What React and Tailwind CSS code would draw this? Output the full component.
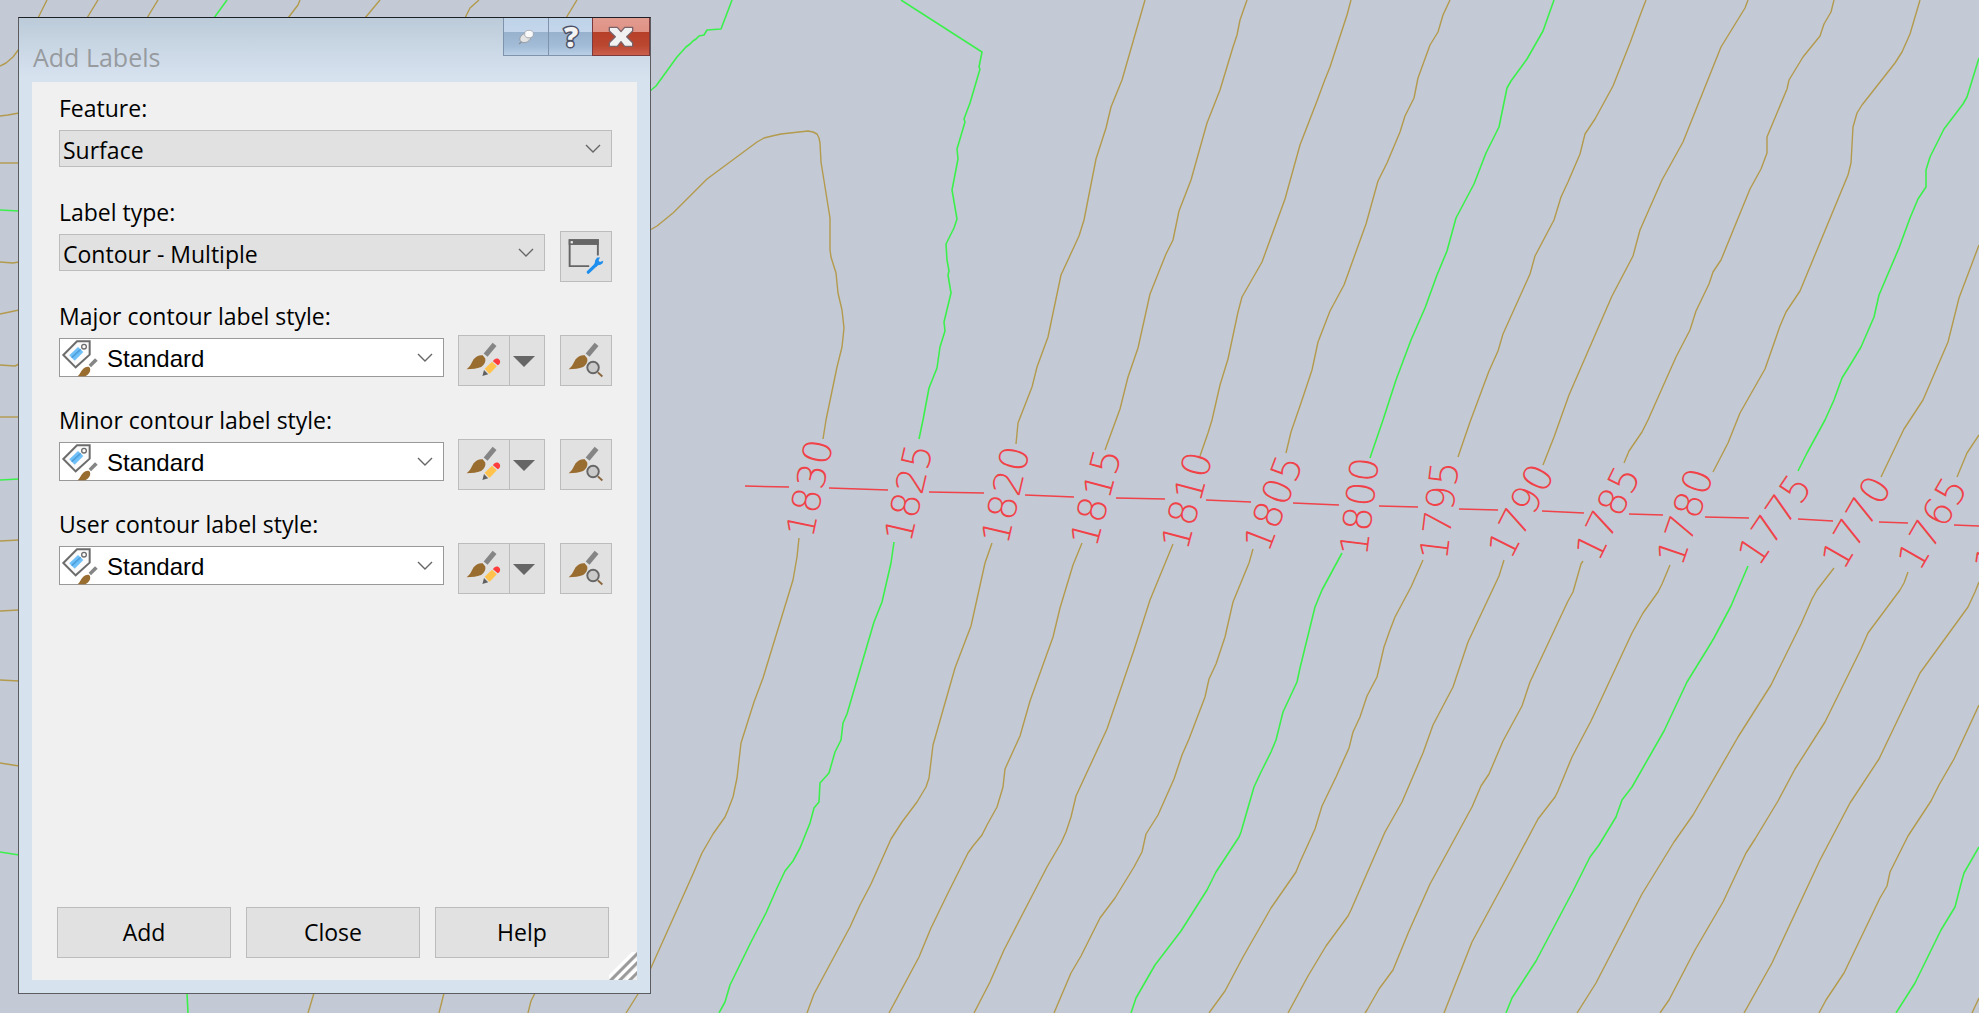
import React, { useState } from "react";

const minorContours = [
  "0,66 6,63 13,57 19,49",
  "0,116 8,115 19,113",
  "0,163 19,163",
  "0,262 13,263 19,262",
  "0,314 19,310",
  "0,365 15,366 19,364",
  "0,417 19,417",
  "0,541 19,540",
  "0,611 19,610",
  "0,680 19,681",
  "0,763 19,766",
  "47,0 38,18",
  "98,0 87,18",
  "158,0 147,18",
  "300,0 298,5 288,18",
  "380,0 365,18",
  "479,0 470,8 465,18",
  "577,0 566,18",
  "314,993 308,1013",
  "444,993 439,1013",
  "535,993 531,1001 528,1013",
  "650,230 657,226 673,213 707,179 757,142 764,138 772,136 781,134 808,131 813,132 817,134 819,138 820,143 821,162 830,218 830,250 831,257 836,273 838,293 842,310 844,328 842,347 837,367 826,420 823,439",
  "1145,0 1122,80 1111,107 1106,128 1096,159 1084,220 1079,236 1061,275 1048,337 1037,367 1032,387 1018,423 1016,444",
  "1247,0 1240,20 1237,35 1233,47 1220,90 1207,123 1191,180 1179,211 1173,240 1166,254 1158,274 1150,294 1138,348 1128,377 1120,409 1105,450",
  "1351,0 1347,15 1330,67 1324,82 1317,101 1300,145 1285,199 1262,262 1242,297 1238,312 1228,359 1220,385 1212,420 1208,433 1200,456",
  "1450,0 1443,15 1438,32 1430,45 1418,78 1414,98 1405,116 1400,132 1387,163 1378,181 1366,224 1344,285 1330,311 1318,342 1312,370 1301,403 1291,432 1286,453",
  "1646,0 1641,13 1630,43 1613,86 1595,119 1585,134 1580,154 1568,182 1561,197 1554,220 1535,256 1530,274 1503,334 1498,351 1489,371 1470,422 1458,457",
  "1748,0 1745,8 1721,47 1683,142 1662,180 1640,230 1633,256 1612,296 1569,395 1554,437 1543,465",
  "1834,0 1831,12 1824,24 1820,36 1803,57 1789,80 1787,89 1767,137 1767,153 1761,169 1750,189 1721,260 1713,272 1709,284 1696,311 1690,330 1676,357 1648,420 1642,432 1629,451 1624,463",
  "1920,0 1910,34 1902,52 1895,63 1862,105 1857,113 1853,127 1851,163 1848,175 1800,291 1786,312 1780,326 1765,369 1740,413 1728,443 1713,472",
  "1979,245 1959,298 1948,342 1923,400 1904,429 1881,477",
  "1979,435 1967,453 1957,477",
  "799,538 797,557 793,580 763,678 754,702 741,743 737,778 733,797 728,810 725,817 713,834 702,853 693,874 650,970 638,994 626,1013",
  "992,543 985,563 971,626 955,668 933,745 929,778 926,787 917,802 902,822 891,839 871,884 860,905 850,927 814,994 807,1013",
  "1082,543 1073,565 1060,608 1053,637 1030,701 1020,736 1005,769 1003,787 997,807 987,825 982,835 973,846 968,853 948,893 931,928 919,957 889,1013",
  "1173,544 1150,600 1134,650 1107,729 1076,796 1071,817 1066,832 1061,843 1047,867 1004,950 990,982 974,1013",
  "1253,549 1249,563 1233,602 1225,637 1216,664 1209,679 1205,697 1189,739 1182,755 1174,779 1158,815 1146,834 1142,852 1134,867 1115,898 1100,918 1081,956 1071,973 1054,1013",
  "1423,560 1411,587 1395,617 1390,630 1384,647 1377,677 1367,696 1360,717 1353,732 1349,748 1336,777 1322,806 1315,829 1300,862 1296,872 1271,908 1243,957 1225,991 1209,1013",
  "1504,560 1499,576 1468,642 1453,687 1433,725 1423,753 1402,802 1385,832 1351,910 1348,916 1326,946 1308,976 1288,1013",
  "1583,561 1581,564 1573,592 1568,601 1530,682 1522,706 1503,741 1489,774 1481,786 1472,807 1430,884 1409,931 1393,970 1379,989 1367,1010 1365,1013",
  "1670,565 1662,584 1658,592 1643,613 1632,633 1591,721 1572,757 1558,791 1555,797 1538,819 1512,868 1472,942 1444,1013",
  "1834,568 1817,590 1812,599 1801,624 1771,685 1738,737 1693,815 1674,842 1642,894 1596,983 1577,1013",
  "1908,572 1904,583 1900,590 1868,633 1861,649 1825,722 1795,769 1778,801 1755,839 1746,853 1723,902 1695,950 1669,1000 1660,1013",
  "1979,582 1975,592 1968,607 1920,673 1879,759 1850,803 1820,860 1772,963 1744,1013",
  "1979,705 1954,759 1939,785 1931,801 1908,836 1890,872 1887,886 1880,898 1844,973 1826,1000 1819,1013",
  "1979,998 1972,1013",
];

const majorContours = [
  "0,210 19,211",
  "0,480 19,479",
  "0,852 19,855",
  "227,0 214,18",
  "187,993 188,1013",
  "732,0 729,8 721,29 707,30 704,35 699,36 696,39 693,41 690,44 686,47 677,57 656,86 650,91",
  "901,0 982,52 979,67 980,69 970,103 964,119 965,122 957,149 958,159 952,190 957,219 954,228 946,244 947,260 949,271 948,275 951,293 944,322 945,331 940,347 937,368 929,388 923,420 919,439",
  "1554,0 1543,31 1527,59 1511,81 1507,88 1499,127 1497,131 1486,153 1474,184 1456,218 1447,251 1437,275 1425,308 1411,340 1396,380 1383,420 1370,458",
  "1979,58 1967,97 1963,104 1944,129 1930,157 1926,170 1926,187 1918,199 1910,218 1899,248 1879,295 1874,317 1861,347 1852,362 1842,378 1834,400 1825,420 1807,453 1798,471",
  "894,542 891,563 882,602 874,622 847,714 843,723 841,740 835,752 829,773 820,783 819,802 814,808 810,823 800,848 793,861 785,871 777,888 766,913 751,942 730,985 725,1002 719,1013",
  "1342,553 1322,590 1315,607 1300,668 1297,682 1283,712 1276,740 1271,752 1261,772 1254,787 1241,832 1239,837 1216,872 1207,890 1181,931 1155,965 1136,998 1131,1013",
  "1748,566 1731,606 1714,638 1708,648 1687,682 1664,731 1632,787 1622,800 1616,817 1599,845 1590,857 1573,891 1536,961 1512,998 1506,1013",
  "1979,847 1964,873 1962,880 1955,907 1941,930 1915,983 1896,1013",
];

// the label line, broken where it runs through a label
const labelLine =
  "M745 486 789 487M829 488 888 490M929 492 984 493M1025 495 1074 497M1116 498 1165 499M1206 500 1251 502M1293 503 1339 505M1379 506 1418 507M1459 509 1498 510M1542 511 1584 513M1629 514 1663 515M1705 517 1749 518M1798 519 1833 521M1879 522 1908 523M1954 525 1979 526";

const contourLabels = [
  { text: "1830", x: 823, y: 491, angle: -78 },
  { text: "1825", x: 922, y: 496, angle: -77 },
  { text: "1820", x: 1019, y: 498, angle: -77 },
  { text: "1815", x: 1109, y: 501, angle: -75 },
  { text: "1810", x: 1200, y: 504, angle: -75 },
  { text: "1805", x: 1286, y: 508, angle: -69 },
  { text: "1800", x: 1373, y: 508, angle: -83 },
  { text: "1795", x: 1453, y: 512, angle: -83 },
  { text: "1790", x: 1533, y: 517, angle: -63 },
  { text: "1785", x: 1620, y: 519, angle: -64 },
  { text: "1780", x: 1698, y: 521, angle: -71 },
  { text: "1775", x: 1786, y: 527, angle: -56 },
  { text: "1770", x: 1868, y: 529, angle: -60 },
  { text: "1765", x: 1944, y: 530, angle: -60 },
  { text: "1760", x: 2020, y: 535, angle: -60 },
];

function ContourMap() {
  return (
    <svg
      className="absolute inset-0 h-full w-full"
      viewBox="0 0 1979 1013"
      preserveAspectRatio="xMinYMin slice"
      fill="none"
    >
      <g stroke="#b39a4c" strokeWidth="1.4" strokeLinejoin="round">
        {minorContours.map((points) => (
          <polyline key={points} points={points} />
        ))}
      </g>
      <g stroke="#3cf04b" strokeWidth="1.6" strokeLinejoin="round">
        {majorContours.map((points) => (
          <polyline key={points} points={points} />
        ))}
      </g>
      <path d={labelLine} stroke="#f04248" strokeWidth="1.5" />
      <g
        className="font-['DejaVu_Sans',sans-serif] text-[39px] font-extralight"
        fill="#f04248"
        textAnchor="middle"
      >
        {contourLabels.map(({ text, x, y, angle }) => (
          <text
            key={text}
            x={x}
            y={y}
            transform={`rotate(${angle} ${x} ${y})`}
          >
            {text}
          </text>
        ))}
      </g>
    </svg>
  );
}

function PinIcon() {
  return (
    <svg width="18" height="18" viewBox="0 0 54 54">
      <path d="M6 48 20 36" stroke="#8b8f96" strokeWidth="4" />
      <ellipse
        cx="25"
        cy="30"
        rx="17"
        ry="13"
        fill="#e4e4e4"
        stroke="#8b8f96"
        strokeWidth="2"
        transform="rotate(-25 25 30)"
      />
      <path d="M20 22 32 10 46 24 34 36Z" fill="#d2d2d2" />
      <ellipse
        cx="36"
        cy="18"
        rx="13"
        ry="11"
        fill="#fafafa"
        stroke="#9a9da3"
        strokeWidth="2"
      />
    </svg>
  );
}

function HelpIcon() {
  return (
    <svg width="28" height="36" viewBox="0 0 28 36">
      <text
        x="14"
        y="28"
        textAnchor="middle"
        className="font-['Open_Sans',sans-serif] text-[28px] font-extrabold"
        fill="#f4f4f4"
        stroke="#4c5165"
        strokeWidth="3"
        strokeLinejoin="round"
        paintOrder="stroke"
      >
        ?
      </text>
    </svg>
  );
}

function CloseIcon() {
  return (
    <svg className="shrink-0" width="26" height="22" viewBox="0 0 78 66">
      <path
        d="M4 4H28L39 17 50 4H74V15L56 32 74 50V61H50L39 47 28 61H4V50L22 32 4 15Z"
        fill="#f1f1f1"
        stroke="#7a6268"
        strokeWidth="4"
        strokeLinejoin="round"
      />
    </svg>
  );
}

function WindowWrenchIcon() {
  return (
    <svg className="h-full w-full" viewBox="0 0 156 150" fill="none">
      <path d="M115 72V24H27V105H88" stroke="#666" strokeWidth="6" />
      <path d="M24 21H118V39H24Z" fill="#666" />
      <path d="M30 27H37V34H30Z" fill="#eee" />
      <path
        d="M85 124 110 100"
        stroke="#1e8fee"
        strokeWidth="10"
        strokeLinecap="round"
      />
      <path
        d="M104 101 107 86 113 78 122 78 117 87 121 92 132 88 130 96 123 101 115 102 110 107Z"
        fill="#1e8fee"
      />
    </svg>
  );
}

function Brush() {
  return (
    <>
      <path d="M77 53 105 20 117 30 89 63Z" fill="#858585" />
      <path
        d="M24 102C36 94 38 84 45 72C53 61 66 57 74 59L82 69C84 79 79 89 69 95C56 101 42 101 24 102Z"
        fill="#996c30"
      />
    </>
  );
}

function BrushPencilIcon() {
  return (
    <svg className="h-full w-full" viewBox="0 0 156 150">
      <Brush />
      <path
        d="M106 77C111 67 121 66 126 73C131 80 127 88 121 90Z"
        fill="#ff3b3b"
      />
      <path d="M80 101 103 79 118 93 95 117Z" fill="#ffc34d" />
      <path d="M78 105 91 118 73 123Z" fill="#606060" />
    </svg>
  );
}

function BrushSearchIcon() {
  return (
    <svg className="h-full w-full" viewBox="0 0 156 150">
      <Brush />
      <path d="M115 112 129 125" stroke="#8a683f" strokeWidth="6" />
      <circle
        cx="100"
        cy="97"
        r="18"
        fill="#cacaca"
        stroke="#666"
        strokeWidth="6"
      />
    </svg>
  );
}

function LabelStyleIcon() {
  return (
    <svg
      className="pointer-events-none absolute left-0 top-0 h-full w-10"
      viewBox="0 0 120 117"
      fill="none"
    >
      <path
        d="M13 51 54 10H92V50L50 88Z"
        fill="#fafafa"
        stroke="#6c6c6c"
        strokeWidth="6"
      />
      <path d="M31 52 57 27 73 42 47 68Z" fill="#6fc0f8" />
      <path d="M38 59 65 34" stroke="#4d9fdc" strokeWidth="5" />
      <circle cx="75" cy="26" r="7" stroke="#6c6c6c" strokeWidth="4" />
      <path d="M89 80 108 61 116 68 96 88Z" fill="#858585" />
      <path
        d="M56 115C63 109 64 101 72 93C79 87 87 85 91 88C96 94 94 104 85 111L79 115Z"
        fill="#996c30"
      />
    </svg>
  );
}

function Chevron() {
  return (
    <svg
      className="pointer-events-none absolute right-[11px] top-1/2 -translate-y-1/2"
      width="16"
      height="10"
      viewBox="0 0 16 10"
      fill="none"
    >
      <path d="M1 1 8 8 15 1" stroke="#666" strokeWidth="1.4" />
    </svg>
  );
}

function GreySelect({ id, value }) {
  return (
    <div className="relative flex-1 pt-[3px]">
      <div className="relative">
        <select
          id={id}
          defaultValue={value}
          className="block h-[37px] w-full appearance-none border border-[#bcbcbc] bg-[#e1e1e1] pl-[3px] pr-10 pt-[2px] text-[23px] text-black"
        >
          <option>{value}</option>
        </select>
        <Chevron />
      </div>
    </div>
  );
}

function FieldGroup({ id, label, children }) {
  return (
    <div>
      <label htmlFor={id} className="mb-[5px] block w-fit text-[23px] leading-7">
        {label}
      </label>
      <div className="flex h-[51px] items-start">{children}</div>
    </div>
  );
}

function ToolButton({ label, className = "", children }) {
  return (
    <button
      type="button"
      aria-label={label}
      className={`h-[51px] shrink-0 border border-[#bcbcbc] bg-[#e1e1e1] hover:bg-[#e5f1fb] ${className}`}
    >
      {children}
    </button>
  );
}

function StyleField({ id, label }) {
  const [style, setStyle] = useState("Standard");
  return (
    <FieldGroup id={id} label={label}>
      <div className="flex-1 pt-[3px]">
        <div className="relative">
          <select
            id={id}
            value={style}
            onChange={(event) => setStyle(event.target.value)}
            className="block h-[39px] w-full appearance-none border border-[#999] bg-white pl-[47px] pr-10 pt-[2px] font-['Liberation_Sans',Arial,sans-serif] text-[24px] text-black"
          >
            <option>Standard</option>
          </select>
          <LabelStyleIcon />
          <Chevron />
        </div>
      </div>
      <div className="ml-[14px] flex">
        <ToolButton label="Edit style" className="w-[52px]">
          <BrushPencilIcon />
        </ToolButton>
        <ToolButton
          label="More style options"
          className="flex w-[35px] items-center justify-center border-l-0 pr-[6px] pt-[2px]"
        >
          <svg width="22" height="11" viewBox="0 0 22 11">
            <path d="M0 0H22L11 11Z" fill="#666" />
          </svg>
        </ToolButton>
      </div>
      <ToolButton label="Pick style" className="ml-[15px] w-[52px]">
        <BrushSearchIcon />
      </ToolButton>
    </FieldGroup>
  );
}

function ResizeGrip() {
  return (
    <svg
      className="absolute bottom-0 right-0"
      width="28"
      height="28"
      viewBox="0 0 28 28"
    >
      <path
        d="M-3 28 28 -3M7 28 28 7M17 28 28 17"
        stroke="#fff"
        strokeWidth="3"
      />
      <path
        d="M1 29 29 1M10 29 29 10M20 29 29 20"
        stroke="#9b9b9b"
        strokeWidth="3"
      />
    </svg>
  );
}

const captionButton =
  "flex items-center justify-center border-b border-l border-[#7f93ad] bg-[linear-gradient(#bfd3e9_0%,#c3d6eb_38%,#98b2ce_39%,#a2bbd6_75%,#b9cfe6_100%)]";

function TitleBar() {
  return (
    <div className="flex h-16 items-start justify-between pl-[14px]">
      <h1 className="pt-6 text-[25px] leading-[30px] text-[#979b9f]">
        Add Labels
      </h1>
      <div className="flex h-[38px]">
        <button
          type="button"
          aria-label="Pin"
          className={`${captionButton} w-[45px]`}
        >
          <PinIcon />
        </button>
        <button
          type="button"
          aria-label="What's this?"
          className={`${captionButton} w-11`}
        >
          <HelpIcon />
        </button>
        <button
          type="button"
          aria-label="Close window"
          className="flex w-[58px] items-center justify-center border-x border-b border-[#7c3a3c] bg-[linear-gradient(#e39c90_0%,#df9185_38%,#b63f28_39%,#bb4730_75%,#c9604d_100%)]"
        >
          <CloseIcon />
        </button>
      </div>
    </div>
  );
}

function FooterButton({ children }) {
  return (
    <button
      type="button"
      className="h-[51px] flex-1 border border-[#bcbcbc] bg-[#e1e1e1] text-[23px] hover:bg-[#e5f1fb]"
    >
      {children}
    </button>
  );
}

function AddLabelsDialog() {
  return (
    <section
      aria-label="Add Labels"
      className="relative flex w-[633px] max-w-full flex-col border border-[#5c5c60] border-t-[#1c1f24] bg-[#d7e2ef] bg-[linear-gradient(#bccbd9,#d7e2ef_60px)]"
    >
      <TitleBar />
      <div className="relative mx-[13px] mb-[13px] flex flex-1 flex-col bg-[#f0f0f0]">
        <form className="flex flex-col gap-5 pl-[27px] pr-[25px] pt-3">
          <FieldGroup id="feature" label="Feature:">
            <GreySelect id="feature" value="Surface" />
          </FieldGroup>
          <FieldGroup id="label-type" label="Label type:">
            <GreySelect id="label-type" value="Contour - Multiple" />
            <ToolButton label="Label settings" className="ml-[15px] w-[52px]">
              <WindowWrenchIcon />
            </ToolButton>
          </FieldGroup>
          <StyleField id="major-style" label="Major contour label style:" />
          <StyleField id="minor-style" label="Minor contour label style:" />
          <StyleField id="user-style" label="User contour label style:" />
        </form>
        <div className="mt-auto flex gap-[15px] pb-[22px] pl-[25px] pr-7 pt-6">
          <FooterButton>Add</FooterButton>
          <FooterButton>Close</FooterButton>
          <FooterButton>Help</FooterButton>
        </div>
        <ResizeGrip />
      </div>
    </section>
  );
}

export default function App() {
  return (
    <main className="relative flex min-h-screen overflow-hidden bg-[#c3cad6] pb-[19px] pl-[18px] pt-[17px] font-['Open_Sans','Noto_Sans',sans-serif] text-black">
      <ContourMap />
      <AddLabelsDialog />
    </main>
  );
}
